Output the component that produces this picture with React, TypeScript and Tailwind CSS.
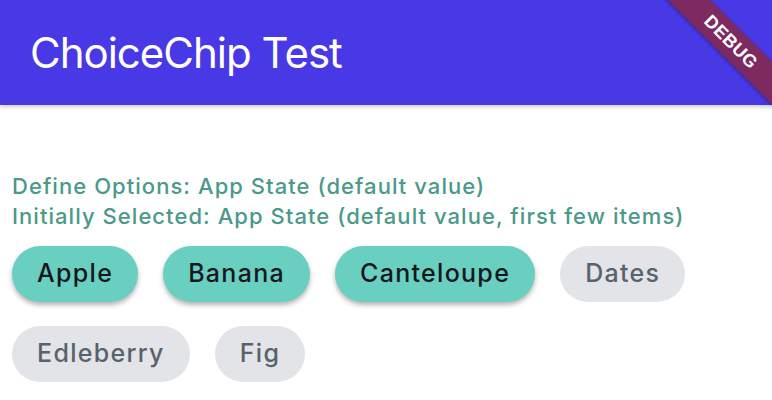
import React from "react"

const chips = [
  { label: "Apple", selected: true },
  { label: "Banana", selected: true },
  { label: "Canteloupe", selected: true },
  { label: "Dates", selected: false },
  { label: "Edleberry", selected: false },
  { label: "Fig", selected: false },
]

function DebugBanner() {
  return (
    <div className="pointer-events-none absolute inset-0 overflow-hidden">
      <div className="absolute left-[626px] top-[27px] flex h-[30px] w-[210px] rotate-45 items-center justify-center bg-[#7c2a5f] shadow-[0_1px_4px_rgba(0,0,0,0.35)]">
        <span className="text-[18px] font-bold tracking-[0.5px] text-white" style={{ fontFamily: '"Liberation Sans", Arial, sans-serif' }}>
          DEBUG
        </span>
      </div>
    </div>
  )
}

export default function App() {
  return (
    <div className="relative h-[400px] w-[772px] overflow-hidden bg-white" style={{ fontFamily: 'Inter, "Noto Sans", sans-serif' }}>
      <header className="relative flex h-[105px] items-center bg-[#4838e6] pl-[30px] shadow-[0_2px_4px_rgba(0,0,0,0.2)]">
        <h1 className="text-[42px] font-normal leading-none tracking-[-1px] text-white">ChoiceChip Test</h1>
      </header>
      <DebugBanner />

      <div className="px-[12px] pt-[66px]">
        <p className="text-[22px] font-medium leading-[30px] tracking-[1.05px] text-[#4a998a]">
          Define Options: App State (default value)
        </p>
        <p className="text-[22px] font-medium leading-[30px] tracking-[1.05px] text-[#4a998a]">
          Initially Selected: App State (default value, first few items)
        </p>
        <div className="mt-[15px] flex flex-wrap gap-x-[25px] gap-y-[24px]">
          {chips.map((c) => (
            <div
              key={c.label}
              className={
                c.selected
                  ? "flex h-[56px] items-center rounded-full bg-[#69cfc0] px-[25px] text-[25px] font-medium tracking-[1.3px] text-[#14181b] shadow-[0_3px_5px_rgba(0,0,0,0.3)]"
                  : "flex h-[56px] items-center rounded-full bg-[#e2e4e8] px-[25px] text-[25px] font-medium tracking-[1.3px] text-[#57636c]"
              }
            >
              {c.label}
            </div>
          ))}
        </div>
      </div>
    </div>
  )
}
